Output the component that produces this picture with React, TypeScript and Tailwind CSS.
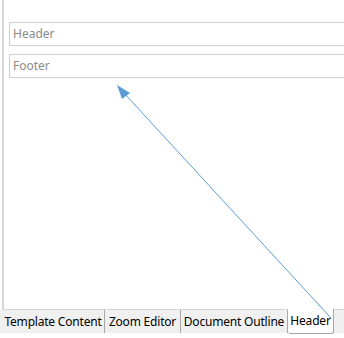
export default function App() {
  const tabs = [
    { t: "Template Content", w: "w-[103px]" },
    { t: "Zoom Editor", w: "w-[76px]" },
    { t: "Document Outline", w: "w-[107px]" },
  ];
  return (
    <div className="relative w-[344px] h-[338px] bg-white overflow-hidden font-['Noto_Sans',sans-serif] text-[12px]">
      {/* panel */}
      <div className="ml-[2px] h-[310px] border-l-2 border-b border-[#d6d6d6] pt-[22px] pl-[5px] flex flex-col gap-[8px]">
        <div className="h-[24px] border border-[#cfcfcf] flex items-center pl-[3px] text-[#8a8a8a] -mr-[4px]">Header</div>
        <div className="h-[24px] border border-[#cfcfcf] flex items-center pl-[3px] text-[#8a8a8a] -mr-[4px]">Footer</div>
      </div>
      {/* tab strip */}
      <div className="flex h-[23px] bg-[#f0f0f0] pl-[2px] whitespace-nowrap">
        {tabs.map(({ t, w }) => (
          <div key={t} className={`${w} shrink-0 border-r border-[#a8a8a8] flex items-center justify-center text-black leading-none tracking-[-0.2px]`}>{t}</div>
        ))}
        <div className="w-[46px] shrink-0 -mt-[1px] h-[25px] bg-white border border-t-0 border-l-0 border-[#a8a8a8] rounded-b-[3px] flex items-center justify-center text-black leading-none tracking-[-0.2px]">Header</div>
      </div>
      {/* arrow */}
      <svg className="absolute inset-0" width="344" height="338">
        <line x1="331" y1="318" x2="123" y2="92" stroke="#5b9bd5" strokeWidth="1" />
        <polygon points="117,85 130,93 122,99" fill="#5b9bd5" />
      </svg>
    </div>
  );
}
